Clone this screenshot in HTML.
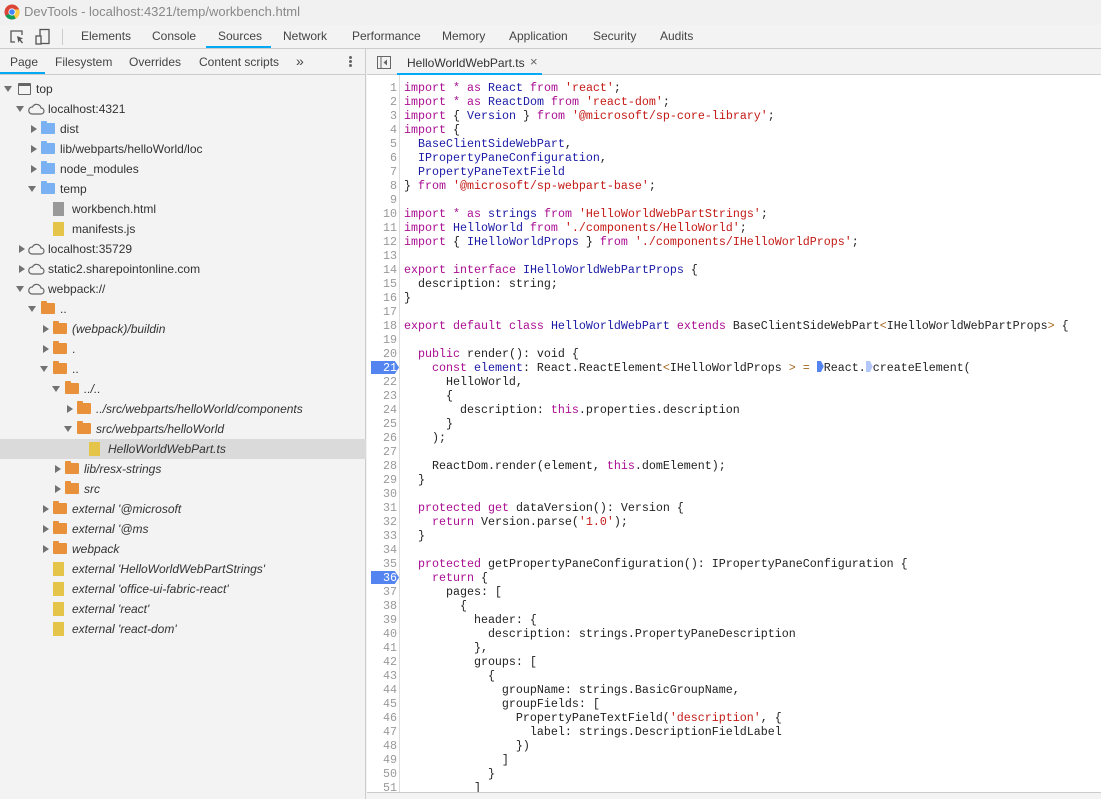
<!DOCTYPE html>
<html><head><meta charset="utf-8"><style>
*{margin:0;padding:0;box-sizing:border-box}
body{width:1101px;height:799px;overflow:hidden;background:#f3f3f3;font-family:"Liberation Sans",sans-serif;font-size:12px;color:#333;position:relative}
.abs{position:absolute}
#title{left:0;top:0;width:1101px;height:25px;background:#f1f1f1;color:#888;font-size:13px}
#tabs{left:0;top:25px;width:1101px;height:24px;background:#f3f3f3;border-bottom:1px solid #ccc}
.tab{position:absolute;top:0;height:23px;line-height:23px;color:#444;font-size:12px}
#left{left:0;top:49px;width:366px;height:750px;background:#f3f3f3;border-right:1px solid #ccc}
#subtabs{left:0;top:49px;width:366px;height:26px;border-bottom:1px solid #ccc}
.row{position:absolute;left:0;width:366px;height:20px;line-height:20px;white-space:nowrap}
.row.sel{background:#dadada}
.arr{position:absolute;top:6px;width:0;height:0}
.ar{border-left:6px solid #727272;border-top:4px solid transparent;border-bottom:4px solid transparent;top:6px}
.ad{border-top:6px solid #727272;border-left:4px solid transparent;border-right:4px solid transparent;top:7px}
.fo{position:absolute;top:4px;width:14px;height:11px;border-radius:1px}
.fo:before{content:"";position:absolute;left:0;top:-2px;width:6px;height:3px;border-radius:1px 1px 0 0;background:inherit}
.fi{position:absolute;top:3px;width:11px;height:14px}
.txt{position:absolute;top:0}
.it{font-style:italic}
#right{left:367px;top:49px;width:734px;height:750px;background:#fff}
#rhead{left:367px;top:49px;width:734px;height:26px;background:#f3f3f3;border-bottom:1px solid #ccc}
#code{left:367px;top:81px;font-family:"Liberation Mono",monospace;font-size:11.67px;line-height:14px;white-space:pre;color:#222}
.ln{position:absolute;left:0;width:30px;text-align:right;color:#999}
.cl{position:absolute;left:37px}
.k{color:#aa0d91}.d{color:#1a1aa6}.s{color:#c41a16}.o{color:#a6661d}
.bp{position:absolute;left:4px;width:28px;height:13px;background:#5384f0;color:#fff}
#gutline{left:399px;top:75px;width:1px;height:717px;background:#ddd}
#status{left:367px;top:792px;width:734px;height:7px;background:#f3f3f3;border-top:1px solid #ccc}
</style></head><body>
<div id="title" class="abs">
<svg class="abs" style="left:4px;top:4px" width="16" height="16" viewBox="0 0 16 16"><circle cx="8" cy="8" r="7.5" fill="#db4437"/><path d="M8 8 L1.5 11.8 A7.5 7.5 0 0 0 11.8 14.5Z" fill="#0f9d58"/><path d="M8 8 L11.8 14.5 A7.5 7.5 0 0 0 15 5.5 L8 5.5Z" fill="#ffcd40"/><circle cx="8" cy="8" r="3.6" fill="#fff"/><circle cx="8" cy="8" r="2.8" fill="#4285f4"/></svg>
<span class="abs" style="left:24px;top:4px">DevTools - localhost:4321/temp/workbench.html</span></div>
<div id="tabs" class="abs">
<svg class="abs" style="left:9px;top:4px" width="16" height="16" viewBox="0 0 16 16" fill="none" stroke="#555" stroke-width="1.3"><path d="M6 13H2V2h11v4"/><path d="M8 7l6 2.5-2.5 1 2.5 3-1 1-2.5-3-1 2.5z" fill="#555" stroke="none"/></svg>
<svg class="abs" style="left:34px;top:3px" width="18" height="18" viewBox="0 0 18 18" fill="none" stroke="#555" stroke-width="1.3"><rect x="6" y="1.5" width="9" height="14"/><rect x="2" y="8" width="5" height="8" fill="#f3f3f3"/></svg>
<div class="abs" style="left:62px;top:4px;width:1px;height:16px;background:#ccc"></div>
<span class="tab" style="left:81px">Elements</span>
<span class="tab" style="left:152px">Console</span>
<span class="tab" style="left:218px">Sources</span>
<div class="abs" style="left:206px;top:21px;width:65px;height:2px;background:#03a9f4"></div>
<span class="tab" style="left:283px">Network</span>
<span class="tab" style="left:352px">Performance</span>
<span class="tab" style="left:442px">Memory</span>
<span class="tab" style="left:509px">Application</span>
<span class="tab" style="left:593px">Security</span>
<span class="tab" style="left:660px">Audits</span>
</div>
<div id="left" class="abs"></div>
<div id="subtabs" class="abs">
<span class="tab" style="left:10px;top:2px">Page</span>
<div class="abs" style="left:0;top:23px;width:45px;height:2px;background:#03a9f4"></div>
<span class="tab" style="left:55px;top:2px">Filesystem</span>
<span class="tab" style="left:129px;top:2px">Overrides</span>
<span class="tab" style="left:199px;top:2px">Content scripts</span>
<span class="tab" style="left:296px;top:1px;font-size:14px">»</span>
<span class="abs" style="left:349px;top:7px;width:3px;height:3px;background:#666;border-radius:2px;box-shadow:0 4px 0 #666,0 8px 0 #666"></span>
</div>
<div id="tree">
<div class="row" style="top:79px"><span class="arr ad" style="left:4px"></span><span class="abs" style="left:18px;top:4px;width:13px;height:12px;border:1.5px solid #666;border-top-width:3px;border-radius:1px"></span><span class="txt" style="left:36px">top</span></div>
<div class="row" style="top:99px"><span class="arr ad" style="left:16px"></span><svg class="abs" style="left:28px;top:4px" width="17" height="12" viewBox="0 0 17 12"><path d="M4 11H13a3 3 0 0 0 0-6 4.5 4.5 0 0 0-8.5-1A3.5 3.5 0 0 0 4 11z" fill="none" stroke="#666" stroke-width="1.2"/></svg><span class="txt" style="left:48px">localhost:4321</span></div>
<div class="row" style="top:119px"><span class="arr ar" style="left:31px"></span><span class="fo" style="left:41px;background:#7ab1f2"></span><span class="txt" style="left:60px">dist</span></div>
<div class="row" style="top:139px"><span class="arr ar" style="left:31px"></span><span class="fo" style="left:41px;background:#7ab1f2"></span><span class="txt" style="left:60px">lib/webparts/helloWorld/loc</span></div>
<div class="row" style="top:159px"><span class="arr ar" style="left:31px"></span><span class="fo" style="left:41px;background:#7ab1f2"></span><span class="txt" style="left:60px">node_modules</span></div>
<div class="row" style="top:179px"><span class="arr ad" style="left:28px"></span><span class="fo" style="left:41px;background:#7ab1f2"></span><span class="txt" style="left:60px">temp</span></div>
<div class="row" style="top:199px"><span class="fi" style="left:53px;background:#999"></span><span class="txt" style="left:72px">workbench.html</span></div>
<div class="row" style="top:219px"><span class="fi" style="left:53px;background:#e5c44a"></span><span class="txt" style="left:72px">manifests.js</span></div>
<div class="row" style="top:239px"><span class="arr ar" style="left:19px"></span><svg class="abs" style="left:28px;top:4px" width="17" height="12" viewBox="0 0 17 12"><path d="M4 11H13a3 3 0 0 0 0-6 4.5 4.5 0 0 0-8.5-1A3.5 3.5 0 0 0 4 11z" fill="none" stroke="#666" stroke-width="1.2"/></svg><span class="txt" style="left:48px">localhost:35729</span></div>
<div class="row" style="top:259px"><span class="arr ar" style="left:19px"></span><svg class="abs" style="left:28px;top:4px" width="17" height="12" viewBox="0 0 17 12"><path d="M4 11H13a3 3 0 0 0 0-6 4.5 4.5 0 0 0-8.5-1A3.5 3.5 0 0 0 4 11z" fill="none" stroke="#666" stroke-width="1.2"/></svg><span class="txt" style="left:48px">static2.sharepointonline.com</span></div>
<div class="row" style="top:279px"><span class="arr ad" style="left:16px"></span><svg class="abs" style="left:28px;top:4px" width="17" height="12" viewBox="0 0 17 12"><path d="M4 11H13a3 3 0 0 0 0-6 4.5 4.5 0 0 0-8.5-1A3.5 3.5 0 0 0 4 11z" fill="none" stroke="#666" stroke-width="1.2"/></svg><span class="txt" style="left:48px">webpack://</span></div>
<div class="row" style="top:299px"><span class="arr ad" style="left:28px"></span><span class="fo" style="left:41px;background:#e8913a"></span><span class="txt" style="left:60px">..</span></div>
<div class="row" style="top:319px"><span class="arr ar" style="left:43px"></span><span class="fo" style="left:53px;background:#e8913a"></span><span class="txt it" style="left:72px">(webpack)/buildin</span></div>
<div class="row" style="top:339px"><span class="arr ar" style="left:43px"></span><span class="fo" style="left:53px;background:#e8913a"></span><span class="txt" style="left:72px">.</span></div>
<div class="row" style="top:359px"><span class="arr ad" style="left:40px"></span><span class="fo" style="left:53px;background:#e8913a"></span><span class="txt" style="left:72px">..</span></div>
<div class="row" style="top:379px"><span class="arr ad" style="left:52px"></span><span class="fo" style="left:65px;background:#e8913a"></span><span class="txt it" style="left:84px">../..</span></div>
<div class="row" style="top:399px"><span class="arr ar" style="left:67px"></span><span class="fo" style="left:77px;background:#e8913a"></span><span class="txt it" style="left:96px">../src/webparts/helloWorld/components</span></div>
<div class="row" style="top:419px"><span class="arr ad" style="left:64px"></span><span class="fo" style="left:77px;background:#e8913a"></span><span class="txt it" style="left:96px">src/webparts/helloWorld</span></div>
<div class="row sel" style="top:439px"><span class="fi" style="left:89px;background:#e5c44a"></span><span class="txt it" style="left:108px">HelloWorldWebPart.ts</span></div>
<div class="row" style="top:459px"><span class="arr ar" style="left:55px"></span><span class="fo" style="left:65px;background:#e8913a"></span><span class="txt it" style="left:84px">lib/resx-strings</span></div>
<div class="row" style="top:479px"><span class="arr ar" style="left:55px"></span><span class="fo" style="left:65px;background:#e8913a"></span><span class="txt it" style="left:84px">src</span></div>
<div class="row" style="top:499px"><span class="arr ar" style="left:43px"></span><span class="fo" style="left:53px;background:#e8913a"></span><span class="txt it" style="left:72px">external '@microsoft</span></div>
<div class="row" style="top:519px"><span class="arr ar" style="left:43px"></span><span class="fo" style="left:53px;background:#e8913a"></span><span class="txt it" style="left:72px">external '@ms</span></div>
<div class="row" style="top:539px"><span class="arr ar" style="left:43px"></span><span class="fo" style="left:53px;background:#e8913a"></span><span class="txt it" style="left:72px">webpack</span></div>
<div class="row" style="top:559px"><span class="fi" style="left:53px;background:#e5c44a"></span><span class="txt it" style="left:72px">external 'HelloWorldWebPartStrings'</span></div>
<div class="row" style="top:579px"><span class="fi" style="left:53px;background:#e5c44a"></span><span class="txt it" style="left:72px">external 'office-ui-fabric-react'</span></div>
<div class="row" style="top:599px"><span class="fi" style="left:53px;background:#e5c44a"></span><span class="txt it" style="left:72px">external 'react'</span></div>
<div class="row" style="top:619px"><span class="fi" style="left:53px;background:#e5c44a"></span><span class="txt it" style="left:72px">external 'react-dom'</span></div>
</div>
<div id="right" class="abs"></div>
<div id="rhead" class="abs">
<svg class="abs" style="left:10px;top:7px" width="14" height="13" viewBox="0 0 14 13"><rect x="0.5" y="0.5" width="13" height="12" fill="none" stroke="#666"/><line x1="4" y1="0" x2="4" y2="13" stroke="#666"/><path d="M10 3.5v6L6.5 6.5z" fill="#666"/></svg>
<span class="abs" style="left:40px;top:7px;color:#333">HelloWorldWebPart.ts</span>
<span class="abs" style="left:163px;top:5px;color:#666;font-size:13px">×</span>
<div class="abs" style="left:30px;top:24px;width:145px;height:2px;background:#03a9f4"></div>
</div>
<div id="gutline" class="abs"></div>
<div id="code" class="abs">
<div class="bp" style="top:280px;clip-path:polygon(0 0,85% 0,100% 50%,85% 100%,0 100%)"></div>
<div class="bp" style="top:490px;clip-path:polygon(0 0,85% 0,100% 50%,85% 100%,0 100%)"></div>
<div class="ln" style="top:0">1
2
3
4
5
6
7
8
9
10
11
12
13
14
15
16
17
18
19
20
<span style="color:#fff">21</span>
22
23
24
25
26
27
28
29
30
31
32
33
34
35
<span style="color:#fff">36</span>
37
38
39
40
41
42
43
44
45
46
47
48
49
50
51</div>
<div class="cl" style="top:0"><span class="k">import</span> <span class="k">*</span> <span class="k">as</span> <span class="d">React</span> <span class="k">from</span> <span class="s">'react'</span>;
<span class="k">import</span> <span class="k">*</span> <span class="k">as</span> <span class="d">ReactDom</span> <span class="k">from</span> <span class="s">'react-dom'</span>;
<span class="k">import</span> { <span class="d">Version</span> } <span class="k">from</span> <span class="s">'@microsoft/sp-core-library'</span>;
<span class="k">import</span> {
  <span class="d">BaseClientSideWebPart</span>,
  <span class="d">IPropertyPaneConfiguration</span>,
  <span class="d">PropertyPaneTextField</span>
} <span class="k">from</span> <span class="s">'@microsoft/sp-webpart-base'</span>;

<span class="k">import</span> <span class="k">*</span> <span class="k">as</span> <span class="d">strings</span> <span class="k">from</span> <span class="s">'HelloWorldWebPartStrings'</span>;
<span class="k">import</span> <span class="d">HelloWorld</span> <span class="k">from</span> <span class="s">'./components/HelloWorld'</span>;
<span class="k">import</span> { <span class="d">IHelloWorldProps</span> } <span class="k">from</span> <span class="s">'./components/IHelloWorldProps'</span>;

<span class="k">export</span> <span class="k">interface</span> <span class="d">IHelloWorldWebPartProps</span> {
  description: string;
}

<span class="k">export</span> <span class="k">default</span> <span class="k">class</span> <span class="d">HelloWorldWebPart</span> <span class="k">extends</span> BaseClientSideWebPart<span class="o">&lt;</span>IHelloWorldWebPartProps<span class="o">&gt;</span> {

  <span class="k">public</span> render(): void {
    <span class="k">const</span> <span class="d">element</span>: React.ReactElement<span class="o">&lt;</span>IHelloWorldProps <span class="o">&gt;</span> <span class="o">=</span> <span style="display:inline-block;width:7px;height:11px;background:#5384f0;clip-path:polygon(0 0,60% 0,100% 50%,60% 100%,0 100%);vertical-align:-1px"></span>React.<span style="display:inline-block;width:7px;height:11px;background:#b3c8f8;clip-path:polygon(0 0,60% 0,100% 50%,60% 100%,0 100%);vertical-align:-1px"></span>createElement(
      HelloWorld,
      {
        description: <span class="k">this</span>.properties.description
      }
    );

    ReactDom.render(element, <span class="k">this</span>.domElement);
  }

  <span class="k">protected</span> <span class="k">get</span> dataVersion(): Version {
    <span class="k">return</span> Version.parse(<span class="s">'1.0'</span>);
  }

  <span class="k">protected</span> getPropertyPaneConfiguration(): IPropertyPaneConfiguration {
    <span class="k">return</span> {
      pages: [
        {
          header: {
            description: strings.PropertyPaneDescription
          },
          groups: [
            {
              groupName: strings.BasicGroupName,
              groupFields: [
                PropertyPaneTextField(<span class="s">'description'</span>, {
                  label: strings.DescriptionFieldLabel
                })
              ]
            }
          ]</div>
</div>
<div id="status" class="abs"></div>
</body></html>
